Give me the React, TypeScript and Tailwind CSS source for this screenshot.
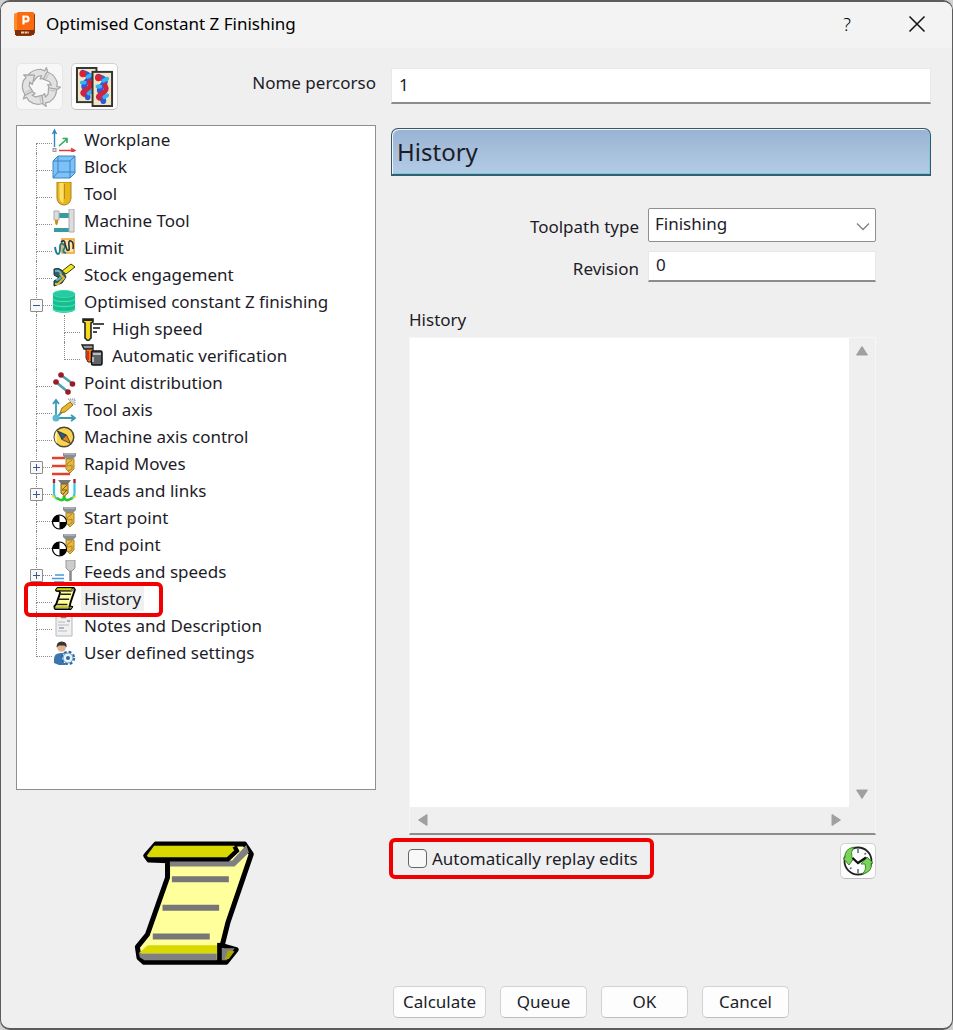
import type { ReactNode } from "react";

function AppLogo() {
  return (
    <svg width="24" height="26" viewBox="0 0 24 26" aria-hidden="true">
      <path d="M5 2h15a2 2 0 0 1 2 2v18l-4 3H3V5z" fill="#8f3a0c" />
      <rect x="1" y="2" width="19" height="19" rx="2" fill="#ff8a2a" />
      <rect x="4" y="1" width="17" height="18" rx="1.5" fill="#fb6a0e" />
      <path d="M2 19h19v5H2z" fill="#7d2f0a" />
      <path d="M10.5 13.500V5.500h2.600a2.400 2.400 0 0 1 0 4.800h-2.600" fill="none" stroke="#fff" strokeWidth="2.200" />
      <path d="M8 21.500h8" stroke="#f4c8ac" strokeWidth="2" strokeDasharray="3 .6" />
    </svg>
  );
}

function RecycleIcon() {
  const seg = "M11 12 Q16 4 27 4 L32 6 L34 2 L38 15 L26 16 L28 12 L23 13 L18 19Z";
  return (
    <svg width="42" height="42" viewBox="0 0 52 52" aria-hidden="true">
      {[0, 72, 144, 216, 288].map((a) => (
        <g key={a} transform={`rotate(${a} 26 26)`}>
          <path d={seg} fill="#e2e2e2" stroke="#a6a6a6" strokeWidth="1.500" strokeLinejoin="round" />
          <path d="M14 11 L19 16" stroke="#c4c4c4" strokeWidth="1.500" />
        </g>
      ))}
    </svg>
  );
}

function Card({ x, y }: { x: number; y: number }) {
  return (
    <g transform={`translate(${x} ${y})`}>
      <rect x="1" y="1" width="20" height="35" fill="#efe6c4" stroke="#333" strokeWidth="2" />
      <path d="M7 6Q17 9 12 14T9 21T12 31" fill="none" stroke="#3158dc" strokeWidth="6" strokeLinecap="round" />
      <path d="M14 15Q17 20 11 23T8 28" fill="none" stroke="#cf2440" strokeWidth="5" strokeLinecap="round" />
      <circle cx="7" cy="7" r="3.500" fill="#e02030" />
      <path d="M12 10l4-2M9 16l-3 0M13 27l3-2" stroke="#35b4ee" strokeWidth="4" strokeLinecap="round" />
    </g>
  );
}

function CompareIcon() {
  return (
    <svg width="39" height="42" viewBox="0 0 40 43" aria-hidden="true">
      <Card x={1} y={1} />
      <Card x={17} y={5} />
    </svg>
  );
}

function Scroll({ size }: { size: "large" | "small" }) {
  return (
    <svg className={size === "large" ? "h-[128px] w-[123px]" : "h-[23px] w-[23px]"} viewBox="40 40 365 382" aria-hidden="true">
      <path d="M145 105 L145 155 L85 325 L55 362 L60 395 L75 408 L320 408 L350 370 L308 358 L325 290 L395 85 L375 55 L110 55 L80 90 L90 103Z" fill="#ffff9c" stroke="#000" strokeWidth={size === "large" ? 15 : 32} strokeLinejoin="round" />
      <path d="M152 104H338L380 58L388 80L345 122H152z" fill="#808080" />
      <path d="M105 60H345L352 75L325 101H95L83 90z" fill="#d9d900" />
      <path d="M345 62 L352 75 L325 101H85" fill="none" stroke="#000" strokeWidth="13" />
      <path d="M86 357H295V382H58z" fill="#d9d900" />
      <path d="M60 382H292V402H76L62 393z" fill="#808080" />
      <path d="M305 366H345L322 402H305z" fill="#808080" />
      <path d="M325 373L345 375L328 398H316z" fill="#a9a900" />
      <path d="M300 350V405" stroke="#000" strokeWidth="14" />
      <path d="M158 160H328M130 245H299M101 331H271" stroke={size === "large" ? "#777" : "#222"} strokeWidth={size === "large" ? 18 : 24} />
    </svg>
  );
}

function ClockIcon() {
  return (
    <svg width="32" height="32" viewBox="0 0 32 32" aria-hidden="true">
      <circle cx="16" cy="16" r="13.500" fill="#fff" stroke="#222" strokeWidth="1.800" />
      <path d="M16 4v4M16 24v4M24 16h4M8 8l1.500 1.500M24 8l-1.500 1.500M8 24l1.500-1.500" stroke="#4b6a86" strokeWidth="1.500" />
      <path d="M12 2Q2 4 3 13L1 13L7 20L12 13L10 13Q8 7 12 2Z" fill="#7bd45a" stroke="#3c8d2c" />
      <path d="M20 29Q31 27 29 18L31 18L25 12L19 19L23 19Q25 25 20 29Z" fill="#7bd45a" stroke="#3c8d2c" />
      <path d="M10.500 13L16 18L24 12.500" fill="none" stroke="#111" strokeWidth="2.200" />
    </svg>
  );
}

function Icon({ children }: { children: ReactNode }) {
  return (
    <svg width="24" height="24" viewBox="0 0 24 24" fill="none" aria-hidden="true">
      {children}
    </svg>
  );
}

const cutter = (
  <>
    <path d="M11 1h13v3l-3 3h-7l-3-3z" fill="#8a8f92" />
    <path d="M12 2h11" stroke="#ccc" />
    <path d="M14 7h8v10l-4 4-4-4z" fill="#e9b93a" stroke="#a98530" />
    <path d="M20 8q-5 3-5 5t5 0v4l-4 2" stroke="#a98530" />
  </>
);

const target = (
  <>
    <circle cx="7.500" cy="16" r="7" fill="#fff" stroke="#000" strokeWidth="1.200" />
    <path d="M7.500 16V9a7 7 0 0 0-7 7zM7.500 16v7a7 7 0 0 0 7-7z" fill="#000" />
  </>
);

const icons: Record<string, ReactNode> = {
  workplane: (
    <>
      <path d="M2.500 19V3M.5 6l2-4 2 4" stroke="#2f86c5" strokeWidth="1.400" />
      <path d="M7 22.500h16M19 20.500l4 2-4 2" stroke="#e23b3b" strokeWidth="1.400" />
      <path d="M7 18l8-7M10.500 10.500H15V15" stroke="#2fa95a" strokeWidth="1.600" />
      <rect x="1" y="20.500" width="3" height="3" fill="#ddd" stroke="#999" />
    </>
  ),
  block: (
    <>
      <path d="M1 6L6 1h17v17l-5 5H1z" fill="#7cc2f8" stroke="#3c83c4" />
      <path d="M1 6h17v17M18 6l5-5M6 1v16h17M6 17l-5 6" stroke="#3c83c4" />
    </>
  ),
  tool: (
    <>
      <path d="M5 0v16a7 7 0 0 0 14 0V0z" fill="#e9b71c" stroke="#a98212" />
      <path d="M7.500 1v14q0 5 4 6V1z" fill="#ffe06a" />
      <path d="M12.500 2v15" stroke="#b98c10" />
    </>
  ),
  machine: (
    <>
      <path d="M7 4h10v5H7z" fill="#379c9e" />
      <path d="M2 19h16v4H2z" fill="#379c9e" />
      <path d="M17 0h5v23h-5z" fill="#ddd" stroke="#aaa" />
      <path d="M2 2h5v9H2z" fill="#ddd" stroke="#aaa" />
      <path d="M3 11h3v3l-1 2H4l-1-2z" fill="#d08a1e" />
    </>
  ),
  limit: (
    <>
      <path d="M10 3h12v14H10z" fill="#ffe4a6" stroke="#e9a52c" strokeWidth="1.500" />
      <path d="M3 11q1 7 3 7t2-6 3-4 1 5 2 4" stroke="#1d8196" strokeWidth="2" />
      <path d="M9 6q4-3 4 2l2 6q3 2 2-4t2-5 2 8" stroke="#333" strokeWidth="1.600" />
    </>
  ),
  stock: (
    <>
      <path d="M2 6q5-2 9 2l3 6-4 6-8 3v-5l5-3-5-3z" fill="#315d68" stroke="#1b3238" />
      <path d="M3 8q5-1 6 3M4 17q4-1 5-3" stroke="#65b7c4" strokeWidth="2" />
      <path d="M10 8l9-7 4 3-9 7z" fill="#f5e61b" stroke="#3a3710" />
      <path d="M8 11l4 4-6 6H3" stroke="#dcb92f" strokeWidth="2" />
    </>
  ),
  cylinder: (
    <>
      <path d="M1 4v15c0 5 22 5 22 0V4z" fill="#19b99a" />
      <ellipse cx="12" cy="4" rx="11" ry="3.500" fill="#27c9a8" stroke="#33e08f" />
      <path d="M1 8.500c0 4 22 4 22 0M1 13.500c0 4 22 4 22 0M1 18.500c0 4 22 4 22 0" stroke="#36e695" strokeWidth="1.400" />
    </>
  ),
  speed: (
    <>
      <path d="M3 2h10v3l-2 1v15l-3 3-3-3V6L3 5z" fill="#f4d91c" stroke="#222" strokeWidth="1.600" />
      <path d="M3 3h10" stroke="#222" strokeWidth="2" />
      <path d="M13 7h11M13 11h7M13 15h4" stroke="#111" strokeWidth="1.600" />
    </>
  ),
  verify: (
    <>
      <path d="M2 1h11v4H4z" fill="#999" stroke="#222" strokeWidth="1.400" />
      <path d="M6 5h7v13H8l-2-4z" fill="#f27a1a" stroke="#222" />
      <path d="M8 7v9" stroke="#e9281c" strokeWidth="2" />
      <rect x="11.500" y="7" width="10.500" height="14" rx="1.500" fill="#5f6468" stroke="#111" strokeWidth="1.500" />
      <path d="M13 10h8M13 18v-5" stroke="#d7d7d7" strokeWidth="1.500" />
    </>
  ),
  points: (
    <>
      <path d="M9 4l12 9M4 11l12 10" stroke="#4fa0ac" strokeWidth="2.600" />
      <g fill="#9d1b24">
        <circle cx="9" cy="4" r="2.800" />
        <circle cx="20.500" cy="13" r="2.800" />
        <circle cx="4" cy="11" r="2.800" />
        <circle cx="16" cy="21" r="2.800" />
      </g>
    </>
  ),
  axis: (
    <>
      <path d="M4 20V3M1 6l3-4 3 4M4 20h18M19 17l4 3-4 3M4 20l7-7" stroke="#379ab5" strokeWidth="1.800" />
      <circle cx="4" cy="20" r="3.500" fill="#5cb8d0" />
      <path d="M8 15l2-5 8-6 3 3-8 7z" fill="#eab62a" stroke="#9c7417" />
      <path d="M16 1h7v6l-4-3z" fill="#d9d9d9" stroke="#888" strokeDasharray="1 1" />
    </>
  ),
  compass: (
    <>
      <circle cx="12" cy="12" r="9.800" fill="#fbd34c" stroke="#4a4a36" strokeWidth="1.500" />
      <path d="M5 5.500a9.500 9.500 0 0 0 0 13z" fill="#fff0b0" />
      <path d="M5.500 6L14.500 10L10 14.500Z" fill="#275d82" stroke="#222" strokeWidth=".8" />
      <path d="M18.500 18.500L14.500 10L10 14.500Z" fill="#e3862a" stroke="#333" strokeWidth=".8" />
    </>
  ),
  rapid: (
    <>
      <path d="M0 6h13M0 14h14M0 22h18" stroke="#e1432a" strokeWidth="2.600" />
      {cutter}
    </>
  ),
  leads: (
    <>
      <path d="M2 4v10q0 5 4 6M22.500 4v10q0 5-4 6" stroke="#35c9dc" strokeWidth="2.200" />
      <path d="M5 19q7 5 7-2 1 7 8 2" stroke="#2bc62b" strokeWidth="2.600" />
      <path d="M2 0v4M22.500 0v4" stroke="#b6202a" strokeWidth="2.400" />
      <path d="M6 1h13l-3 4H9z" fill="#777" />
      <path d="M9 5h7v9l-3.500 3L9 14z" fill="#e9b93a" stroke="#7b5e1b" />
      <path d="M15 6l-5 5h5l-4 4" stroke="#7b5e1b" />
      <path d="M0 16l3 3M21 19l3-2" stroke="#f1d62b" strokeWidth="2" />
    </>
  ),
  target: (
    <>
      {cutter}
      {target}
    </>
  ),
  feeds: (
    <>
      <path d="M14 0h9v8l-3 3h-3l-3-3z" fill="#ccc" stroke="#999" />
      <path d="M18.500 11v10" stroke="#888" strokeWidth="2.500" />
      <path d="M3 15h9M0 18.500h12M2 22h10" stroke="#4a98dc" strokeWidth="1.400" />
    </>
  ),
  notes: (
    <>
      <path d="M4 2h4l1 2h5l1-2h5v20H4z" fill="#f0f0f0" stroke="#b8b8b8" />
      <path d="M9 1h5v3H9z" fill="#888" />
      <path d="M6 8h7M6 11h11M6 17h9" stroke="#bbb" />
      <path d="M7 14h5M15 7h3" stroke="#5c7fa0" />
    </>
  ),
  user: (
    <>
      <path d="M2 22v-4q0-6 7-6h3q5 0 6 6l-5 6H7z" fill="#3b77ad" />
      <circle cx="9.500" cy="6.500" r="4.300" fill="#e0b08f" />
      <path d="M4.500 6.500q0-6 5-6 6 0 5 6l-2-2H7z" fill="#3b3330" />
      <circle cx="16" cy="17" r="6" fill="#fff" stroke="#2b6aa5" strokeWidth="2.400" strokeDasharray="2.700 2" />
      <circle cx="16" cy="17" r="5" fill="#eaf3fb" stroke="#5f97c8" />
      <circle cx="16" cy="17" r="2" fill="#2b6aa5" />
    </>
  ),
};

type Node = { label: string; icon: string; box?: "+" | "-"; children?: Node[] };

const tree: Node[] = [
  { label: "Workplane", icon: "workplane" },
  { label: "Block", icon: "block" },
  { label: "Tool", icon: "tool" },
  { label: "Machine Tool", icon: "machine" },
  { label: "Limit", icon: "limit" },
  { label: "Stock engagement", icon: "stock" },
  {
    label: "Optimised constant Z finishing",
    icon: "cylinder",
    box: "-",
    children: [
      { label: "High speed", icon: "speed" },
      { label: "Automatic verification", icon: "verify" },
    ],
  },
  { label: "Point distribution", icon: "points" },
  { label: "Tool axis", icon: "axis" },
  { label: "Machine axis control", icon: "compass" },
  { label: "Rapid Moves", icon: "rapid", box: "+" },
  { label: "Leads and links", icon: "leads", box: "+" },
  { label: "Start point", icon: "target" },
  { label: "End point", icon: "target" },
  { label: "Feeds and speeds", icon: "feeds", box: "+" },
  { label: "History", icon: "scroll" },
  { label: "Notes and Description", icon: "notes" },
  { label: "User defined settings", icon: "user" },
];

function TreeItem({ node, first, last }: { node: Node; first: boolean; last: boolean }) {
  const selected = node.label === "History";
  return (
    <li>
      <div className="relative flex h-[27px] items-center">
        <span className="flex h-full w-4 shrink-0 flex-col">
          <span className={`h-[18px] border-b border-dotted border-[#8a8a8a] ${first ? "" : "border-l"}`} />
          <span className={`flex-1 border-dotted border-[#8a8a8a] ${last ? "" : "border-l"}`} />
        </span>
        {node.box && (
          <button
            type="button"
            aria-label={`${node.box === "+" ? "Expand" : "Collapse"} ${node.label}`}
            className="absolute top-[11px] -left-1.5 flex size-[13px] items-center justify-center rounded-[1px] border border-[#8c8c8c] bg-[#f8f8f8]"
          >
            <svg width="9" height="9" viewBox="0 0 9 9" aria-hidden="true">
              <path d={node.box === "+" ? "M1 4.500h7M4.500 1v7" : "M1 4.500h7"} stroke="#3a5795" />
            </svg>
          </button>
        )}
        <span className="flex w-6 shrink-0 justify-center">
          {node.icon === "scroll" ? <Scroll size="small" /> : <Icon>{icons[node.icon]}</Icon>}
        </span>
        <a href="#" className={`ml-[5px] px-[3px] leading-[25px] whitespace-nowrap ${selected ? "bg-[#f0f0f0]" : ""}`}>
          {node.label}
        </a>
        {selected && (
          <span className="pointer-events-none absolute -top-[3px] -left-3 z-10 h-[35px] w-[139px] rounded-md border-4 border-[#f00000]" />
        )}
      </div>
      {node.children && (
        <ul className="border-l border-dotted border-[#8a8a8a] pl-[27px]">
          {node.children.map((c, i) => (
            <TreeItem key={c.label} node={c} first={false} last={i === node.children!.length - 1} />
          ))}
        </ul>
      )}
    </li>
  );
}

function Arrow({ d, label }: { d: string; label: string }) {
  return (
    <button type="button" aria-label={label} className="flex size-[26px] items-center justify-center">
      <svg width="14" height="14" viewBox="0 0 14 14" aria-hidden="true">
        <path d={d} fill="#a0a0a0" stroke="#a0a0a0" strokeLinejoin="round" />
      </svg>
    </button>
  );
}

const push = "rounded-[5px] border border-[#d2d2d2] border-b-[#bdbdbd] bg-[#fdfdfd]";
const field = "w-full border border-[#e8e8e8] border-b-2 border-b-[#8c8c8c] bg-white px-[7px] pb-[3px] outline-none";

export default function App() {
  return (
    <div className="bg-[#d0d0d0]">
      <div className="flex min-h-screen flex-col overflow-hidden rounded-[10px] border border-t-2 border-b-2 border-[#5c5c5c] bg-[#efefef] font-['Noto_Sans','Open_Sans',sans-serif] text-[17px] text-[#1c1c28]">
        <header className="flex h-[46px] items-center bg-[#f3f3f3] pr-[21px] pb-0.5 pl-3 text-black">
          <AppLogo />
          <h1 className="ml-[9px] flex-1 text-[17px]">Optimised Constant Z Finishing</h1>
          <button type="button" aria-label="Help" className="mr-[46px] w-5 text-[18px] font-light">?</button>
          <button type="button" aria-label="Close" className="flex size-7 items-center justify-center">
            <svg width="18" height="18" viewBox="0 0 18 18" aria-hidden="true">
              <path d="M1.500 1.500l15 15M16.500 1.500l-15 15" stroke="#111" strokeWidth="1.500" />
            </svg>
          </button>
        </header>

        <div className="grid grid-cols-[2fr_3fr] gap-x-[15px] pt-[15px] pr-[21px] pb-[15px] pl-[15px]">
          <div className="flex items-start gap-2">
            <button type="button" disabled aria-label="Recycle" className="flex size-[47px] items-center justify-center rounded-[5px] border border-[#e6e6e6] bg-[#f7f7f7]">
              <RecycleIcon />
            </button>
            <button type="button" aria-label="Compare" className={`flex size-[47px] items-center justify-center ${push}`}>
              <CompareIcon />
            </button>
            <label htmlFor="name" className="flex h-10 flex-1 items-center justify-end">Nome percorso</label>
          </div>
          <div className="pt-[5px]">
            <input id="name" defaultValue="1" className={`h-9 ${field}`} />
          </div>
        </div>

        <main className="grid flex-1 grid-cols-[2fr_3fr] gap-x-[15px] pr-[21px] pl-[15px]">
          <div className="flex flex-col">
            <nav aria-label="Strategy pages" className="flex-1 border border-[#8b8f94] bg-white pl-[19px]">
              <ul>
                {tree.map((n, i) => (
                  <TreeItem key={n.label} node={n} first={i === 0} last={i === tree.length - 1} />
                ))}
              </ul>
            </nav>
            <div className="flex h-[238px] items-start justify-center pt-[49px] pr-1.5">
              <Scroll size="large" />
            </div>
          </div>

          <div className="flex flex-col pt-[3px]">
            <h2 className="flex h-12 items-center rounded-t-[7px] border border-b-2 border-[#3f5560] border-b-[#31626e] bg-linear-to-b from-[#98b3d3] to-[#b3cce6] px-[5px] text-[24px] shadow-[inset_1px_1px_0_#eef6fd,inset_-1px_-1px_0_#7fc8e4]">
              History
            </h2>
            <div className="flex flex-1 flex-col pr-[55px] pl-[18px]">
              <div className="mt-8 grid grid-cols-[1fr_228px] items-center gap-x-[9px] gap-y-[9px]">
                <label htmlFor="type" className="pt-1 text-right">Toolpath type</label>
                <div className="relative">
                  <select id="type" className="block h-[34px] w-full appearance-none rounded-[2px] border border-[#8e8e8e] bg-white px-[6px] pb-0.5 outline-none">
                    <option>Finishing</option>
                  </select>
                  <svg width="14" height="9" viewBox="0 0 14 9" className="pointer-events-none absolute top-3.5 right-1.5" aria-hidden="true">
                    <path d="M1 1.500l6 6 6-6" fill="none" stroke="#808080" strokeWidth="1.300" />
                  </svg>
                </div>
                <label htmlFor="revision" className="pt-1 text-right">Revision</label>
                <input id="revision" defaultValue="0" className={`h-[31px] ${field}`} />
              </div>

              <label htmlFor="log" className="mt-[25px] leading-[25px]">History</label>
              <div className="mt-[5px] flex flex-1 flex-col border border-[#f6f6f6] border-b-2 border-b-[#8c8c8c]">
                <div className="flex flex-1">
                  <textarea id="log" readOnly className="min-w-0 flex-1 resize-none bg-white p-1 outline-none" />
                  <div className="flex flex-col justify-between">
                    <Arrow label="Scroll up" d="M1.500 11h11L7 2.500z" />
                    <Arrow label="Scroll down" d="M1.500 3h11L7 11.500z" />
                  </div>
                </div>
                <div className="flex justify-between pr-[26px]">
                  <Arrow label="Scroll left" d="M11 1.500v11L2.500 7z" />
                  <Arrow label="Scroll right" d="M3 1.500v11L11.500 7z" />
                </div>
              </div>

              <div className="mt-[3px] -ml-5 flex items-start justify-between">
                <label className="flex h-[41px] items-center gap-[5px] rounded-md border-4 border-[#f00000] pr-3 pl-[15px]">
                  <input type="checkbox" className="size-[19px] appearance-none rounded-[4px] border border-[#666] bg-[#f8f8f8]" />
                  Automatically replay edits
                </label>
                <button type="button" aria-label="Replay history" className={`mt-[5px] flex size-9 items-center justify-center ${push}`}>
                  <ClockIcon />
                </button>
              </div>
            </div>
            <div className="mt-[107px] flex gap-3.5 pb-2.5 pl-0.5">
              <button type="button" className={`h-8 w-[93px] ${push}`}>Calculate</button>
              <button type="button" className={`h-8 w-[87px] ${push}`}>Queue</button>
              <button type="button" className={`h-8 w-[87px] ${push}`}>OK</button>
              <button type="button" className={`h-8 w-[87px] ${push}`}>Cancel</button>
            </div>
          </div>
        </main>
      </div>
    </div>
  );
}
